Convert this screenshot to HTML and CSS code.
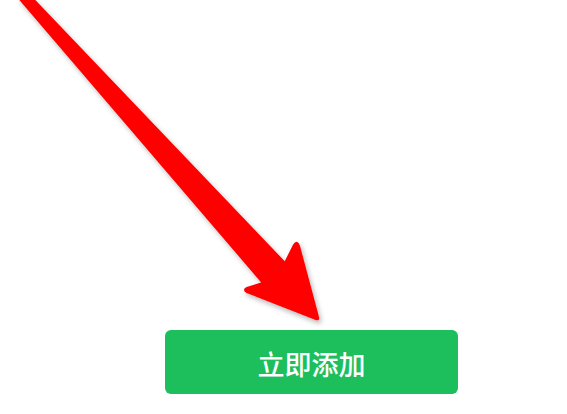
FILE: index.html
```html
<!DOCTYPE html>
<html lang="zh">
<head>
<meta charset="utf-8">
<link rel="stylesheet" href="styles.css">
</head>
<body>
<div class="page">
  <svg class="arrow" width="567" height="414" viewBox="0 0 567 414" aria-hidden="true">
    <defs>
      <filter id="sh" x="-10%" y="-10%" width="130%" height="130%">
        <feDropShadow dx="2" dy="3" stdDeviation="2.5" flood-color="#000" flood-opacity="0.28"/>
      </filter>
    </defs>
    <path filter="url(#sh)" fill="#ff0000" stroke="#ff0000" stroke-width="2" stroke-linejoin="round"
      d="M19 -2 L32 -2 L285 263 L294 245 Q297 240 299 246 L318 317 Q319 320 316 319 L247 292 Q243 290 247 288 L263 283 Z"/>
  </svg>
  <button class="add-btn">立即添加</button>
</div>
</body>
</html>
```
FILE: styles.css
```css
html, body {
  margin: 0;
  padding: 0;
  background: #ffffff;
}
.page {
  position: relative;
  width: 567px;
  height: 414px;
  overflow: hidden;
  padding: 330px 0 0 165px;
  box-sizing: border-box;
}
.arrow {
  position: absolute;
  left: 0;
  top: 0;
}
.add-btn {
  display: flex;
  align-items: center;
  justify-content: center;
  width: 293px;
  height: 64px;
  border: none;
  border-radius: 6px;
  background: #1cbf5c;
  color: #ffffff;
  font-family: "Noto Sans CJK SC", "Noto Sans", sans-serif;
  font-size: 27px;
  font-weight: 500;
  padding: 0;
  padding-top: 2px;
  box-sizing: border-box;
}
```
